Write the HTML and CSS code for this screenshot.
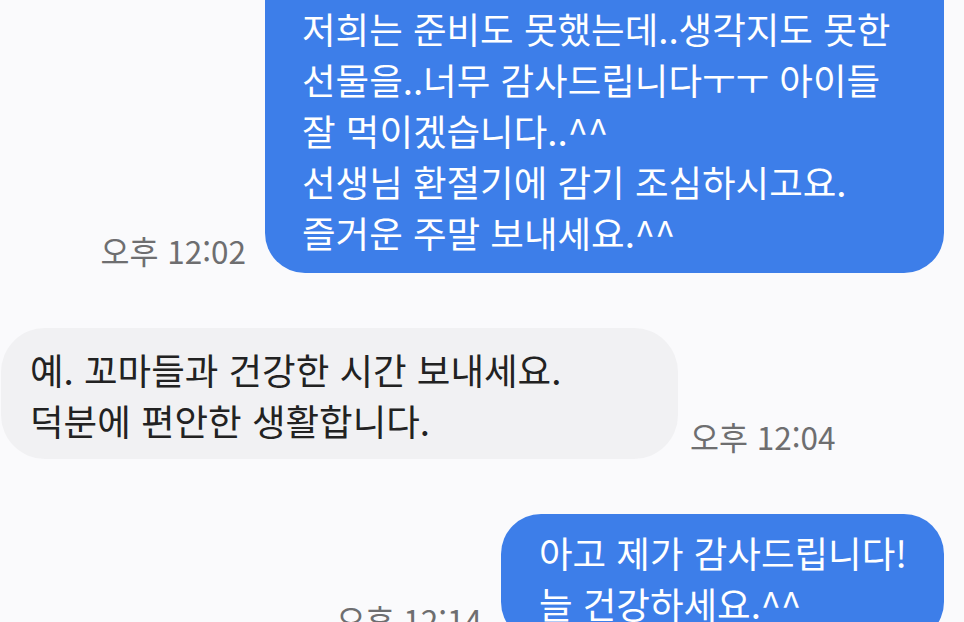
FILE: index.html
```html
<!DOCTYPE html>
<html lang="ko">
<head>
    <meta charset="UTF-8">
    <meta name="viewport" content="width=device-width, initial-scale=1.0">
    <title>메시지</title>

    <link rel="stylesheet" href="styles.css">
</head>

<body>
    <div id="chat">
        <!-- 보낸 메시지 -->
        <div class="row out first">
            <span class="time">오후 12:02</span>
            <div class="bubble blue wide">
                저희는 준비도 못했는데..생각지도 못한<br>
                선물을..너무 감사드립니다ㅜㅜ 아이들<br>
                잘 먹이겠습니다..^^<br>
                선생님 환절기에 감기 조심하시고요.<br>
                즐거운 주말 보내세요.^^
            </div>
        </div>

        <!-- 받은 메시지 -->
        <div class="row in">
            <div class="bubble gray">
                예. 꼬마들과 건강한 시간 보내세요.<br>
                덕분에 편안한 생활합니다.
            </div>
            <span class="time">오후 12:04</span>
        </div>

        <div class="row out">
            <span class="time">오후 12:14</span>
            <div class="bubble blue">
                아고 제가 감사드립니다!<br>
                늘 건강하세요.^^
            </div>
        </div>
    </div>
</body>

</html>
```

FILE: styles.css
```css
html,
body {
    margin: 0;
    height: 100%;
    overflow: hidden;
    background-color: #fafafc;
}

#chat {
    display: flex;
    flex-direction: column;
    gap: 55px;
    font-family: "Noto Sans CJK KR", "Noto Sans", sans-serif;
}

.row {
    display: flex;
    align-items: flex-end;
}

.row.out {
    justify-content: flex-end;
    gap: 19px;
    padding-right: 20px;
}

.row.in {
    gap: 12px;
    padding-left: 1px;
}

/* 첫 말풍선은 위가 잘려 있음 */
.row.first {
    margin-top: -40px;
}

.bubble {
    font-size: 36.5px;
    line-height: 51px;
    white-space: nowrap;
    box-sizing: border-box;
}

.blue {
    color: #ffffff;
    background-color: #3d7ee9;
    border-radius: 40px;
    padding: 13px 37px 13px 38px;
}

.wide {
    width: 679px;
    padding-top: 43px;
    padding-bottom: 15px;
    padding-left: 37px;
}

.gray {
    color: #222222;
    background-color: #f1f1f3;
    border-radius: 44px;
    width: 677px;
    padding: 16px 30px 13px 29px;
}

.time {
    font-size: 31.5px;
    line-height: 36px;
    color: #6e6e70;
    white-space: nowrap;
    margin-bottom: 5px;
}

.row.in .time {
    margin-bottom: 5px;
}
```
